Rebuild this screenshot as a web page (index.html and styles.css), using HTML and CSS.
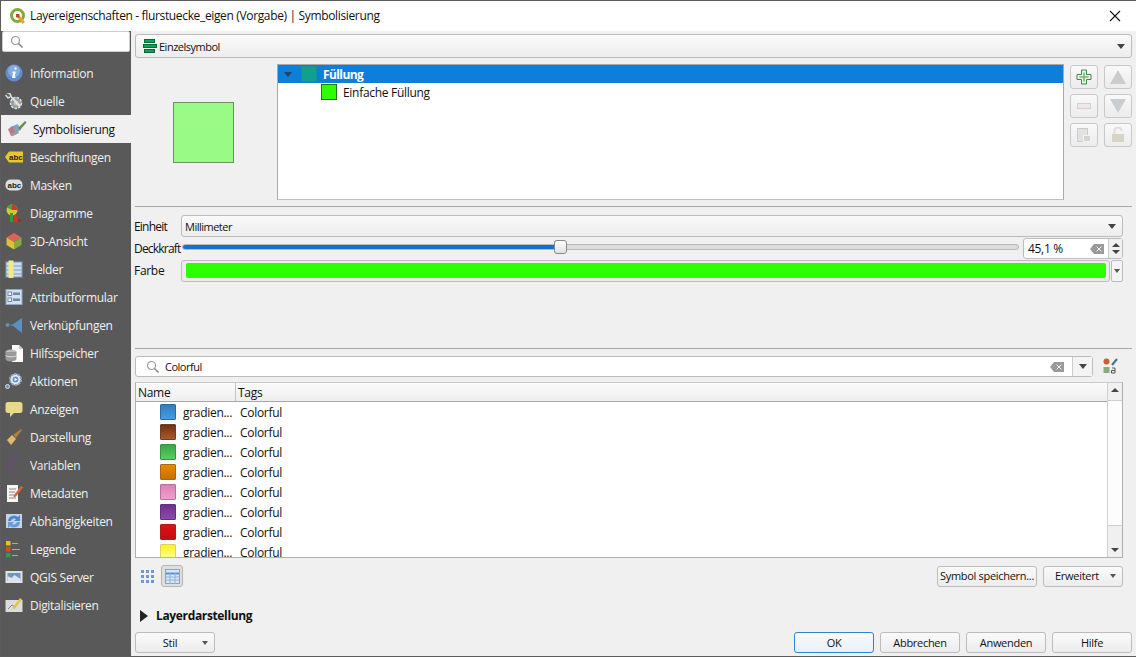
FILE: index.html
```html
<!DOCTYPE html>
<html lang="de">
<head>
<meta charset="utf-8">
<title>Layereigenschaften</title>
<link rel="stylesheet" href="styles.css">
</head>
<body>
<div class="window">
  <header class="titlebar">
    <svg class="logo" width="18" height="18" viewBox="0 0 18 18"><circle cx="8.500" cy="8.500" r="6" fill="none" stroke="#86a93a" stroke-width="3"/><path d="M9.500 7.500l6.500 7.500-2.400 2-6-7.500z" fill="#e4a72d"/><rect x="7" y="7" width="3.400" height="3.400" fill="#c7432c"/></svg>
    <span class="title">Layereigenschaften - flurstuecke_eigen (Vorgabe) | Symbolisierung</span>
    <svg class="close" width="12" height="12" viewBox="0 0 12 12"><path d="M1 1l10 10M11 1L1 11" stroke="#111" stroke-width="1.100"/></svg>
  </header>
  <div class="body">
    <aside class="sidebar">
      <div class="side-search"><svg width="14" height="14" viewBox="0 0 14 14"><circle cx="5.500" cy="5.500" r="4" fill="none" stroke="#999" stroke-width="1.200"/><path d="M8.500 8.500l4 4" stroke="#888" stroke-width="1.600"/></svg></div>
      <nav class="nav">
        <div class="nav-item"><svg class="ico" viewBox="0 0 18 18"><circle cx="9" cy="9" r="8.500" fill="#5b8fd0"/><circle cx="9" cy="7" r="6" fill="#86acdd"/><path d="M9.500 3.500h2v2h-2zM7.500 7.500h3.300L9.600 12.600h1l-.3 1.400H7l1.100-5.100H7.300z" fill="#fff"/></svg><span>Information</span></div>
        <div class="nav-item"><svg class="ico" viewBox="0 0 18 18"><circle cx="11" cy="11" r="5.500" fill="#8e9cae" stroke="#dfe3e8" stroke-width="1.500" stroke-dasharray="2.500 1.200"/><circle cx="11" cy="11" r="2.400" fill="#e8c860"/><path d="M1 1.500l3.500 1 .8 2.500L14 15l2-1.500L7 4.500 5.500 1z" fill="#e2e2e2"/><path d="M.5 3l2.500 3 2-1" fill="none" stroke="#e2e2e2" stroke-width="1.400"/></svg><span>Quelle</span></div>
        <div class="nav-item active"><svg class="ico wide" viewBox="0 0 20 18"><path d="M3 7l8-3 3 6-8 4z" fill="#7fa6c9"/><path d="M1 9l5-2.500 3 7.500-5 2z" fill="#b8798a"/><path d="M4 14l7-3 1 2-7 3.500z" fill="#9b9b9b"/><path d="M11 8l7-7 1.500 1.500-6.500 7.500z" fill="#6f8a4e"/></svg><span>Symbolisierung</span></div>
        <div class="nav-item"><svg class="ico" viewBox="0 0 18 18"><path d="M0 9l4-5.500h14v11H4z" fill="#e7c72e"/><text x="4" y="12" class="ico-text">abc</text></svg><span>Beschriftungen</span></div>
        <div class="nav-item"><svg class="ico" viewBox="0 0 18 18"><rect x="0.500" y="3.500" width="17" height="11" rx="5" fill="#dedede"/><text x="2.500" y="12" class="ico-text">abc</text></svg><span>Masken</span></div>
        <div class="nav-item"><svg class="ico" viewBox="0 0 18 18"><circle cx="7" cy="6" r="5.500" fill="#d7c43a"/><path d="M7 6V.5A5.500 5.500 0 0 1 12.500 6z" fill="#c6392c"/><path d="M7 6L2 3.500A5.500 5.500 0 0 1 7 .5z" fill="#4a9e3e"/><rect x="5" y="9" width="3" height="9" fill="#2f9e36"/><rect x="9" y="12" width="3" height="6" fill="#c6392c"/><rect x="13" y="15" width="3" height="3" fill="#a52a20"/></svg><span>Diagramme</span></div>
        <div class="nav-item"><svg class="ico" viewBox="0 0 18 18"><path d="M9 1l7.500 4.500L9 10 1.500 5.500z" fill="#e2605a"/><path d="M1.500 5.500L9 10v7.500L1.500 13z" fill="#d9c23a"/><path d="M16.500 5.500L9 10v7.500l7.500-4.500z" fill="#7fae3c"/></svg><span>3D-Ansicht</span></div>
        <div class="nav-item"><svg class="ico" viewBox="0 0 18 18"><rect x="1" y="2" width="16" height="15" fill="#cfdceb" stroke="#7f9dc0"/><path d="M1 6h16M1 10h16M1 14h16" stroke="#7f9dc0"/><rect x="3.500" y="0.500" width="5" height="17.500" fill="#f2e98c"/></svg><span>Felder</span></div>
        <div class="nav-item"><svg class="ico" viewBox="0 0 18 18"><rect x="1" y="1.500" width="16" height="15" fill="#d5e0ee" stroke="#8ca8c8"/><rect x="3" y="4" width="3.500" height="3.500" fill="#fff" stroke="#6b88ab"/><rect x="3" y="10" width="3.500" height="3.500" fill="#fff" stroke="#6b88ab"/><rect x="8" y="4.500" width="7" height="2.500" fill="#6b88ab"/><rect x="8" y="10.500" width="7" height="2.500" fill="#6b88ab"/></svg><span>Attributformular</span></div>
        <div class="nav-item"><svg class="ico" viewBox="0 0 18 18"><circle cx="2.500" cy="9" r="2" fill="#5d8fc7"/><path d="M7 9l10-7v15z" fill="#5d8fc7"/><path d="M5 9h3" stroke="#5d8fc7"/></svg><span>Verknüpfungen</span></div>
        <div class="nav-item"><svg class="ico" viewBox="0 0 18 18"><path d="M7 1h7l4 4v13H7z" fill="#fff"/><path d="M14 1v4h4" fill="#ccc"/><ellipse cx="6" cy="8" rx="5.500" ry="2.500" fill="#bbb"/><path d="M.5 8v7c0 1.400 2.500 2.500 5.500 2.500s5.500-1.100 5.500-2.500V8z" fill="#999"/><path d="M.5 11.500c1 1.700 10 1.700 11 0" fill="none" stroke="#ddd"/></svg><span>Hilfsspeicher</span></div>
        <div class="nav-item"><svg class="ico" viewBox="0 0 18 18"><circle cx="10.500" cy="7.500" r="5.500" fill="#e8eef5" stroke="#8fa3b8" stroke-width="2" stroke-dasharray="2.400 1"/><circle cx="10.500" cy="7.500" r="3" fill="#6793c9"/><path d="M9.500 6l3 1.500-3 1.500z" fill="#fff"/><circle cx="2.500" cy="14.500" r="2" fill="#5d8fc7" stroke="#ddd"/></svg><span>Aktionen</span></div>
        <div class="nav-item"><svg class="ico" viewBox="0 0 18 18"><path d="M3 2h12q2.500 0 2.500 2.500v6q0 2.500-2.500 2.500H9l-4 4v-4H3Q.5 13 .5 10.500v-6Q.5 2 3 2z" fill="#e7d88a"/></svg><span>Anzeigen</span></div>
        <div class="nav-item"><svg class="ico" viewBox="0 0 18 18"><path d="M2 12l5-5 4 4-5 6z" fill="#e2b86a"/><path d="M8 7l8-6 1 1-6 8z" fill="#b17f35"/></svg><span>Darstellung</span></div>
        <div class="nav-item"><svg class="ico" viewBox="0 0 18 18"><path d="M13 2.500C10 0 5 1 5 4.500c0 1.800 1 3 3 3.500-3 .5-4.500 2-4.500 4.200 0 3.800 5 4.800 9.500 2.800" fill="none" stroke="#6a4a78" stroke-width="2"/></svg><span>Variablen</span></div>
        <div class="nav-item"><svg class="ico" viewBox="0 0 18 18"><path d="M2 1h11v17H2z" fill="#f6f6f6"/><path d="M4 5h7M4 8h6M4 11h5M4 14h7" stroke="#888"/><path d="M9 11l7-9 2 1.500-7 9-2.500 1z" fill="#d9653a"/></svg><span>Metadaten</span></div>
        <div class="nav-item"><svg class="ico" viewBox="0 0 18 18"><rect x="1" y="2" width="16" height="14" fill="#c4d4e8"/><path d="M3 9a6 6 0 0 1 10-4l2-2v6H9l2-2a3.500 3.500 0 0 0-5 2z" fill="#4f86c6"/><path d="M15 10a6 6 0 0 1-10 4l-2 2v-6h6l-2 2a3.500 3.500 0 0 0 5-2z" fill="#6a9ad3"/></svg><span>Abhängigkeiten</span></div>
        <div class="nav-item"><svg class="ico" viewBox="0 0 18 18"><rect x="1" y="1" width="4.500" height="4.500" fill="#e5c12a"/><rect x="1" y="7" width="4.500" height="4.500" fill="#d64a2c"/><rect x="1" y="13" width="4.500" height="4.500" fill="#2f9a48"/><path d="M7 3.500h6M7 9.500h8M7 15.500h6" stroke="#aaa" stroke-width="1.200"/></svg><span>Legende</span></div>
        <div class="nav-item"><svg class="ico" viewBox="0 0 18 18"><rect x="0.500" y="3" width="17" height="12" fill="#e3e3e3"/><rect x="2.500" y="5" width="13" height="8" fill="#6d96c6"/><path d="M2.500 8l4 2 3-3 6 4v2H2.500z" fill="#d9e4ef"/></svg><span>QGIS Server</span></div>
        <div class="nav-item"><svg class="ico" viewBox="0 0 18 18"><rect x="0.500" y="4" width="17" height="12" fill="#dcdcdc"/><path d="M3 13l4-4 3 2" fill="none" stroke="#888"/><path d="M8 11l7-9 2 1.500-7 9-2.500 1z" fill="#e5c63e"/></svg><span>Digitalisieren</span></div>
      </nav>
    </aside>
    <main class="main">
      <div class="combo top-combo">
        <svg width="14" height="14" viewBox="0 0 14 14"><rect x="1.500" y="0.500" width="10" height="3" fill="#12a255" stroke="#07693a"/><rect x="0.500" y="5.500" width="13" height="3" fill="#12a255" stroke="#07693a"/><rect x="1.500" y="10.500" width="10" height="3" fill="#12a255" stroke="#07693a"/></svg>
        <span class="grow">Einzelsymbol</span><i class="caret"></i>
      </div>
      <section class="symbol">
        <div class="preview-wrap"><div class="preview"></div></div>
        <div class="tree">
          <div class="tree-row selected"><i class="caret tree-caret"></i><i class="tree-swatch teal"></i><b>Füllung</b></div>
          <div class="tree-row sub"><i class="tree-swatch lime"></i><span>Einfache Füllung</span></div>
        </div>
        <div class="tool-grid">
          <button class="tool"><svg width="16" height="16" viewBox="0 0 16 16"><path d="M5.500 1h5v4.500H15v5h-4.500V15h-5v-4.500H1v-5h4.500z" fill="#e8f4e6" stroke="#3d8c4a"/><path d="M8 3.500v9M3.500 8h9" stroke="#74b57b" stroke-width="1.500"/></svg></button>
          <button class="tool"><svg width="16" height="14" viewBox="0 0 16 14"><path d="M8 0l8 14H0z" fill="#c9cdd0"/></svg></button>
          <button class="tool"><svg width="14" height="6" viewBox="0 0 14 6"><rect x="0.500" y="0.500" width="13" height="5" fill="#eee8e8" stroke="#dacfcf"/></svg></button>
          <button class="tool"><svg width="16" height="14" viewBox="0 0 16 14"><path d="M8 14L0 0h16z" fill="#c9cdd0"/></svg></button>
          <button class="tool"><svg width="14" height="14" viewBox="0 0 14 14"><rect x="0.500" y="0.500" width="10" height="13" fill="#e2e2e2" stroke="#ccc"/><rect x="6.500" y="7.500" width="7" height="6" fill="#d5d5cc" stroke="#f3f3f3"/></svg></button>
          <button class="tool"><svg width="14" height="16" viewBox="0 0 14 16"><path d="M3.500 7V4a3.500 3.500 0 0 1 7 0" fill="none" stroke="#ddd" stroke-width="2"/><rect x="1" y="7" width="12" height="8" fill="#d6d4c4"/></svg></button>
        </div>
      </section>
      <hr class="sep first">
      <section class="props">
        <div class="prop-row unit"><label class="tight">Einheit</label><div class="combo flex-combo"><span class="grow">Millimeter</span><i class="caret"></i></div></div>
        <div class="prop-row opacity"><label class="tight">Deckkraft</label>
          <div class="slider"><div class="groove"><div class="fill" style="width:45.1%"></div></div><div class="handle" style="left:45.1%"></div></div>
          <div class="spin"><span class="grow">45,1 %</span><svg class="clear" width="14" height="10" viewBox="0 0 14 10"><path d="M4 0h10v10H4L0 5z" fill="#9a9a9a"/><path d="M6.500 2.500l5 5M11.500 2.500l-5 5" stroke="#eee"/></svg><span class="spin-arrows"><i></i><i></i></span></div>
        </div>
        <div class="prop-row color"><label class="plain">Farbe</label>
          <div class="color-btn"><div class="color-fill"></div></div>
          <div class="color-drop"><i class="caret small"></i></div>
        </div>
      </section>
      <hr class="sep second">
      <section class="library">
        <div class="lib-search">
          <div class="combo search-combo">
            <svg class="mag" width="14" height="14" viewBox="0 0 14 14"><circle cx="5.500" cy="5.500" r="4" fill="none" stroke="#999" stroke-width="1.200"/><path d="M8.500 8.500l4 4" stroke="#888" stroke-width="1.600"/></svg>
            <span class="grow">Colorful</span>
            <svg class="clear" width="14" height="10" viewBox="0 0 14 10"><path d="M4 0h10v10H4L0 5z" fill="#9a9a9a"/><path d="M6.500 2.500l5 5M11.500 2.500l-5 5" stroke="#eee"/></svg>
            <span class="search-drop"><i class="caret"></i></span>
          </div>
          <div class="style-icon"><svg width="16" height="16" viewBox="0 0 16 16"><circle cx="4.500" cy="3.500" r="3" fill="#c9602e"/><path d="M10 7l5-6" stroke="#3c6fa8" stroke-width="2"/><rect x="1.500" y="9" width="6" height="6" fill="#8aa97d"/><path d="M10 10h3v5h-3.500v-2.500H13" fill="none" stroke="#555"/></svg></div>
        </div>
        <div class="table">
          <div class="thead"><div class="th name">Name</div><div class="th">Tags</div><div class="th-end"></div></div>
          <div class="tbody">
            <div class="rows">
              <div class="row"><i class="swatch s1"></i><span class="n">gradien...</span><span>Colorful</span></div>
              <div class="row"><i class="swatch s2"></i><span class="n">gradien...</span><span>Colorful</span></div>
              <div class="row"><i class="swatch s3"></i><span class="n">gradien...</span><span>Colorful</span></div>
              <div class="row"><i class="swatch s4"></i><span class="n">gradien...</span><span>Colorful</span></div>
              <div class="row"><i class="swatch s5"></i><span class="n">gradien...</span><span>Colorful</span></div>
              <div class="row"><i class="swatch s6"></i><span class="n">gradien...</span><span>Colorful</span></div>
              <div class="row"><i class="swatch s7"></i><span class="n">gradien...</span><span>Colorful</span></div>
              <div class="row"><i class="swatch s8"></i><span class="n">gradien...</span><span>Colorful</span></div>
            </div>
          </div>
          <div class="scrollbar"><i class="up"></i><div class="thumb"></div><i class="down"></i></div>
        </div>
        <div class="lib-actions">
          <button class="view-btn"><svg width="15" height="15" viewBox="0 0 15 15"><path d="M1 2.500h3M6 2.500h3M11 2.500h3M1 7.500h3M6 7.500h3M11 7.500h3M1 12.500h3M6 12.500h3M11 12.500h3" stroke="#6c9bd2" stroke-width="3"/></svg></button>
          <button class="view-btn pressed"><svg width="15" height="15" viewBox="0 0 15 15"><rect x="0.500" y="0.500" width="14" height="14" fill="#d8e5f3" stroke="#7ea6d3"/><path d="M1 4.500h13" stroke="#5f92cc" stroke-width="2"/><path d="M1 8h13M1 11h13M5 4v11M10 4v11" stroke="#8fb2da"/></svg></button>
          <span class="grow"></span>
          <button class="btn save">Symbol speichern...</button>
          <button class="btn menu-btn"><span class="grow">Erweitert</span><i class="caret small"></i></button>
        </div>
      </section>
      <div class="group"><i class="group-arrow"></i><b>Layerdarstellung</b></div>
      <footer class="footer">
        <button class="btn menu-btn stil"><span class="grow">Stil</span><i class="caret small"></i></button>
        <span class="grow"></span>
        <button class="btn dlg primary">OK</button>
        <button class="btn dlg">Abbrechen</button>
        <button class="btn dlg">Anwenden</button>
        <button class="btn dlg">Hilfe</button>
      </footer>
    </main>
  </div>
</div>
</body>
</html>
```
FILE: styles.css
```css
* { box-sizing: border-box; }
html, body { margin: 0; padding: 0; }
body { font: 12px/16px "Open Sans", "Noto Sans", sans-serif; color: #111; background: #f0f0f0; letter-spacing: -0.3px; }
i { display: block; }
button { font: inherit; letter-spacing: inherit; color: inherit; margin: 0; padding: 0; }
.window { width: 1136px; height: 657px; display: flex; flex-direction: column; overflow: hidden; border: 1px solid #5c5c5c; border-right: 0; }
.grow { flex: 1 1 auto; min-width: 0; }

.titlebar { height: 30px; flex: none; background: #fff; display: flex; align-items: center; padding: 0 15px 0 8px; }
.logo { flex: none; margin-right: 3px; }
.title { flex: 1; letter-spacing: -0.35px; }
.close { flex: none; }

.body { flex: 1; display: flex; min-height: 0; }
.sidebar { width: 130px; flex: none; background: #595959; }
.side-search { height: 21px; margin: 0 1px; background: #fff; border: 1px solid #ccc; border-radius: 2px; padding: 3px 0 0 7px; }
.side-search svg { display: block; }
.nav { padding-top: 7px; }
.nav-item { height: 28px; display: flex; align-items: center; padding-left: 4px; color: #f0f0f0; }
.nav-item span { margin-left: 7px; padding-top: 2px; }
.ico { width: 18px; height: 18px; flex: none; }
.ico-text { font: bold 8px "Liberation Sans", sans-serif; fill: #222; letter-spacing: 0; }
.nav-item.active { background: #f0f0f0; color: #111; padding-left: 6px; }
.ico.wide { width: 20px; }
.nav-item.active span { margin-left: 6px; }

.main { flex: 1; min-width: 0; display: flex; flex-direction: column; padding: 3px 4px 0; }
.combo { display: flex; align-items: center; background: linear-gradient(#fafafa, #ededed); border: 1px solid #bcbcbc; border-radius: 3px; font-size: 11px; letter-spacing: -0.5px; }
.combo .grow { padding-top: 1px; }
.caret { width: 0; height: 0; border: 4px solid transparent; border-top: 5px solid #444; border-bottom: 0; flex: none; }
.caret.small { border-width: 3px; border-top-width: 4px; border-bottom-width: 0; border-top-color: #555; }
.top-combo { height: 24px; padding: 0 6px 0 7px; gap: 2px; }
.top-combo .grow { padding-top: 2px; }

.symbol { height: 136px; margin-top: 6px; display: flex; flex: none; }
.preview-wrap { width: 142px; flex: none; padding: 38px 0 0 38px; }
.preview { width: 61px; height: 61px; background: #99fb85; border: 1px solid #6b9163; }
.tree { width: 787px; flex: none; background: #fff; border: 1px solid #a9a9a9; border-bottom-color: #c0c0c0; }
.tree-row { height: 18px; display: flex; align-items: center; }
.tree-row b, .tree-row span { padding-top: 2px; }
.tree-row b { letter-spacing: -0.6px; }
.tree-row.selected { background: #0f7edb; color: #fff; padding-left: 6px; }
.tree-caret { border-top-color: #27415c; margin-right: 9px; }
.tree-swatch { width: 16px; height: 16px; flex: none; }
.teal { background: #12a08e; border: 1px solid #1390a0; margin-right: 6px; }
.lime { background: #2dff00; border: 1px solid #1e7a10; margin-right: 6px; }
.tree-row.sub { padding-left: 43px; }
.tool-grid { margin-left: 6px; display: grid; grid-template-columns: 28px 28px; grid-auto-rows: 24px; column-gap: 6px; row-gap: 5px; align-content: start; padding-top: 1px; }
.tool { background: linear-gradient(#f9f9f9, #ececec); border: 1px solid #c8c8c8; border-radius: 3px; display: flex; align-items: center; justify-content: center; }

.sep { border: 0; height: 1px; background: #a8a8a8; margin: 0; flex: none; }
.sep.first { margin-top: 6px; }
.sep.second { margin-top: 66px; }

.props { flex: none; padding-top: 8px; }
.prop-row { display: flex; align-items: center; padding-right: 9px; }
.prop-row label { width: 47px; flex: none; margin-left: -1px; padding-top: 1px; }
.prop-row label.tight { letter-spacing: -0.8px; }
.prop-row label.plain { padding-top: 0; }
.unit { height: 22px; }
.flex-combo { flex: 1; height: 22px; padding: 0 6px 0 3px; }
.opacity { height: 21px; margin-top: 1px; }
.slider { flex: 1; height: 14px; position: relative; margin: -3px 4px 0 1px; }
.groove { position: absolute; left: 0; right: 0; top: 4px; height: 6px; background: #dcdcdc; border: 1px solid #b8b8b8; border-radius: 3px; overflow: hidden; }
.fill { height: 100%; background: #1273cf; }
.handle { position: absolute; top: 0; width: 13px; height: 14px; margin-left: -5px; background: linear-gradient(#fdfdfd, #e2e2e2); border: 1px solid #888; border-radius: 3px; }
.spin { width: 100px; height: 21px; flex: none; display: flex; align-items: center; background: #fff; border: 1px solid #bcbcbc; border-radius: 3px; padding-left: 4px; }
.spin .clear { margin-right: 4px; }
.spin-arrows { width: 14px; align-self: stretch; flex: none; background: #f0f0f0; border-left: 1px solid #ccc; display: flex; flex-direction: column; justify-content: center; gap: 3px; align-items: center; }
.spin-arrows i { width: 0; height: 0; border: 4px solid transparent; }
.spin-arrows i:first-child { border-bottom: 4px solid #444; border-top: 0; }
.spin-arrows i:last-child { border-top: 4px solid #444; border-bottom: 0; }
.color { height: 22px; margin-top: 1px; }
.color-btn { width: 929px; flex: none; height: 22px; padding: 2px 3px 3px 4px; background: #ececec; border: 1px solid #bcbcbc; border-radius: 3px; }
.color-fill { height: 100%; background: #2dff00; border-radius: 2px; }
.color-drop { width: 12px; height: 22px; flex: none; margin-left: 1px; border: 1px solid #bcbcbc; border-radius: 2px; background: #f4f4f4; display: flex; align-items: center; justify-content: center; }

.library { flex: none; padding: 7px 9px 0 0; }
.lib-search { display: flex; align-items: center; height: 21px; }
.search-combo { width: 958px; height: 21px; background: #fff; padding-left: 10px; }
.mag { margin-right: 5px; }
.search-combo .clear { margin-right: 8px; }
.search-drop { width: 20px; align-self: stretch; flex: none; border-left: 1px solid #ccc; display: flex; align-items: center; justify-content: center; background: #f4f4f4; }
.style-icon { margin-left: 9px; width: 20px; height: 21px; flex: none; padding-top: 2px; }
.style-icon svg { display: block; }

.table { position: relative; margin-top: 5px; height: 176px; background: #fff; border: 1px solid #b0b0b0; border-top-color: #c8c8c8; overflow: hidden; }
.thead { height: 19px; display: flex; background: linear-gradient(#fbfbfb, #eeeeee); border-bottom: 1px solid #a8a8a8; padding-right: 15px; }
.th { padding: 1px 0 0 2px; line-height: 18px; }
.th.name { width: 100px; border-right: 1px solid #c4c4c4; }
.th-end { flex: 1; }
.tbody { height: 155px; overflow: hidden; margin-right: 15px; }
.row { height: 20px; display: flex; align-items: center; padding-left: 24px; }
.row span { padding-top: 2px; }
.swatch { width: 16px; height: 16px; border-radius: 1px; flex: none; margin-right: 7px; }
.row .n { width: 57px; flex: none; }
.s1 { background: linear-gradient(#2f7fc0, #4a9be0); border: 1px solid #2d6b9c; }
.s2 { background: linear-gradient(#6e3212, #a85a2a); border: 1px solid #6d4025; }
.s3 { background: linear-gradient(#35a845, #5cce60); border: 1px solid #3d8f4a; }
.s4 { background: linear-gradient(#e88a00, #c87000); border: 1px solid #a86a10; }
.s5 { background: linear-gradient(#dd80b8, #efa0cc); border: 1px solid #b87098; }
.s6 { background: linear-gradient(#6e3090, #8c4aa8); border: 1px solid #603080; }
.s7 { background: linear-gradient(#e01010, #c00c14); border: 1px solid #a82020; }
.s8 { background: linear-gradient(#fff020, #ffffa0); border: 1px solid #d8d060; }
.scrollbar { position: absolute; top: 0; right: 0; bottom: 0; width: 15px; background: #f0f0f0; border-left: 1px solid #d0d0d0; }
.scrollbar .up, .scrollbar .down { position: absolute; left: 3px; width: 0; height: 0; border: 4px solid transparent; }
.scrollbar .up { top: 5px; border-bottom: 4px solid #444; border-top: 0; }
.scrollbar .down { bottom: 5px; border-top: 4px solid #444; border-bottom: 0; }
.thumb { position: absolute; left: 0; right: 0; top: 17px; height: 126px; background: #fdfdfd; border-top: 1px solid #cfcfcf; border-bottom: 1px solid #cfcfcf; }

.lib-actions { margin-top: 7px; height: 22px; display: flex; align-items: center; padding-left: 1px; }
.view-btn { width: 22px; height: 22px; background: transparent; border: 1px solid transparent; border-radius: 3px; display: flex; align-items: center; justify-content: center; margin-right: 3px; }
.view-btn.pressed { background: #dedede; border-color: #b5b5b5; }
.btn { height: 21px; background: linear-gradient(#fafafa, #ececec); border: 1px solid #bcbcbc; border-radius: 3px; text-align: center; white-space: nowrap; font-size: 11px; letter-spacing: -0.3px; }
.save { width: 100px; margin-right: 6px; }
.menu-btn { width: 80px; display: flex; align-items: center; padding: 0 6px 0 0; }
.group { margin-top: 20px; height: 18px; display: flex; align-items: center; flex: none; padding-left: 5px; letter-spacing: -0.35px; }
.group-arrow { width: 0; height: 0; border: 6px solid transparent; border-left: 8px solid #222; border-right: 0; margin-right: 8px; }
.footer { display: flex; align-items: center; margin-top: 7px; height: 21px; flex: none; }
.stil .grow { padding-left: 2px; }
.dlg { width: 80px; margin-left: 6px; }
.dlg.primary { border-color: #2f84d0; background: linear-gradient(#f8fbfe, #e8f0f8); }
```
